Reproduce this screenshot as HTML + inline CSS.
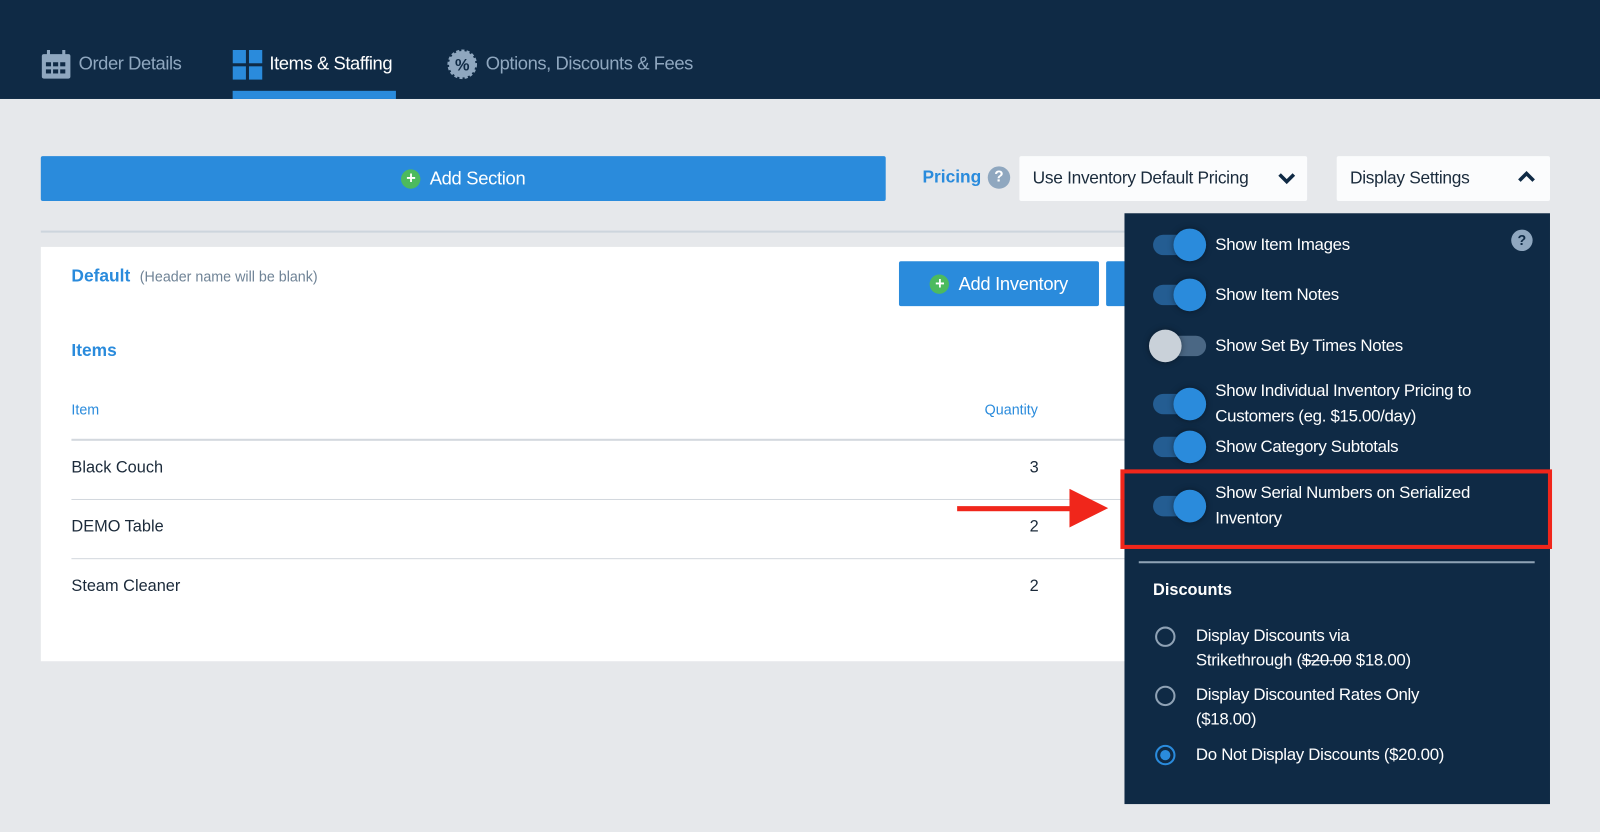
<!DOCTYPE html>
<html><head><style>
*{margin:0;padding:0;box-sizing:border-box}
body{width:1600px;height:815px;background:#e6e8eb;font-family:"Liberation Sans",sans-serif;position:relative;overflow:hidden}
#w{position:absolute;left:0;top:0;width:1600px;height:815px;transform:scale(1.0204);transform-origin:0 0}
.a{position:absolute}
.hdr{left:0;top:0;width:1600px;height:97px;background:#0f2a45}
.tab{top:52px;font-size:18px;color:#8fa7bf;white-space:nowrap;letter-spacing:-0.4px}
.btn{background:#2a8bdc;border-radius:2px;color:#fff;font-size:18px;display:flex;align-items:center;justify-content:center;letter-spacing:-0.3px}
.plus{width:19px;height:19px;border-radius:50%;background:#4cba5e;color:#fff;font-size:16px;font-weight:bold;line-height:19px;text-align:center;margin-right:9px}
.sel{background:#fbfcfd;border-radius:2px;font-size:17px;color:#1a2b3c;padding-left:13px;line-height:44px;letter-spacing:-0.3px}
.row{left:70px;width:1060px;height:1px;background:#d3d8de}
.cell{font-size:16px;color:#1b2a3a}
.tg{width:52px;height:24px}
.tg .tr{position:absolute;left:0;top:3px;width:52px;height:20px;border-radius:10px;background:#245d92}
.tg .kn{position:absolute;left:20px;top:-3px;width:32px;height:32px;border-radius:50%;background:#2a8bdc;box-shadow:0 0 6px rgba(0,0,0,.4)}
.tg.off .tr{background:#4a6784}
.tg.off .kn{left:-4px;background:#c9d1d9}
.lb{color:#fff;font-size:16.5px;line-height:25px;letter-spacing:-0.3px}
.rd{width:20px;height:20px;border-radius:50%;border:2px solid #8fa2b5}
</style></head><body><div id="w">
<div class="a hdr"></div>
<svg class="a" style="left:40px;top:48px" width="30" height="30" viewBox="0 0 30 30"><rect x="1" y="5" width="28" height="24" rx="2" fill="#8fa7bf"/><rect x="6" y="1" width="3" height="7" fill="#8fa7bf"/><rect x="21" y="1" width="3" height="7" fill="#8fa7bf"/><g fill="#0f2a45"><rect x="5" y="13" width="5" height="4"/><rect x="12" y="13" width="5" height="4"/><rect x="19" y="13" width="5" height="4"/><rect x="5" y="20" width="5" height="4"/><rect x="12" y="20" width="5" height="4"/><rect x="19" y="20" width="5" height="4"/></g></svg>
<div class="a tab" style="left:77px">Order Details</div>
<svg class="a" style="left:228px;top:49px" width="30" height="30"><g fill="#2a8bdc"><rect x="0" y="0" width="13" height="13"/><rect x="16" y="0" width="13" height="13"/><rect x="0" y="16" width="13" height="13"/><rect x="16" y="16" width="13" height="13"/></g></svg>
<div class="a tab" style="left:264px;color:#fff">Items &amp; Staffing</div>
<div class="a" style="left:228px;top:89px;width:160px;height:8px;background:#2a8bdc"></div>
<svg class="a" style="left:438px;top:48px" width="30" height="30" viewBox="0 0 30 30"><circle cx="15" cy="15" r="13" fill="#8fa7bf" stroke="#8fa7bf" stroke-width="3" stroke-dasharray="3 2"/><text x="15" y="21" font-size="16" font-weight="bold" text-anchor="middle" fill="#0f2a45" font-family="Liberation Sans">%</text></svg>
<div class="a tab" style="left:476px">Options, Discounts &amp; Fees</div>

<div class="a btn" style="left:40px;top:153px;width:828px;height:44px"><span class="plus">+</span>Add Section</div>
<div class="a" style="left:904px;top:164px;font-size:17px;font-weight:bold;color:#2a8bdc">Pricing</div>
<div class="a" style="left:968px;top:163px;width:22px;height:22px;border-radius:50%;background:#8fa7bf;color:#fff;font-weight:bold;font-size:15px;text-align:center;line-height:22px">?</div>
<div class="a sel" style="left:999px;top:153px;width:282px;height:44px">Use Inventory Default Pricing</div>
<svg class="a" style="left:1252px;top:168px" width="18" height="14"><path d="M2 3l7 7 7-7" stroke="#0f2a45" stroke-width="3.5" fill="none"/></svg>
<div class="a sel" style="left:1310px;top:153px;width:209px;height:44px">Display Settings</div>
<svg class="a" style="left:1487px;top:166px" width="18" height="14"><path d="M2 11l7-7 7 7" stroke="#0f2a45" stroke-width="3.5" fill="none"/></svg>

<div class="a" style="left:40px;top:226px;width:1100px;height:2px;background:#cdd5dd"></div>
<div class="a" style="left:40px;top:242px;width:1100px;height:406px;background:#fff"></div>
<div class="a" style="left:70px;top:261px;font-size:17px;font-weight:bold;color:#2a8bdc">Default</div>
<div class="a" style="left:137px;top:263px;font-size:14px;color:#6f8396">(Header name will be blank)</div>
<div class="a btn" style="left:881px;top:256px;width:196px;height:44px"><span class="plus">+</span>Add Inventory</div>
<div class="a btn" style="left:1084px;top:256px;width:40px;height:44px"></div>
<div class="a" style="left:70px;top:334px;font-size:17px;font-weight:bold;color:#2a8bdc">Items</div>
<div class="a" style="left:70px;top:393px;font-size:14px;color:#2a8bdc">Item</div>
<div class="a" style="left:965px;top:393px;font-size:14px;color:#2a8bdc">Quantity</div>
<div class="a row" style="top:430px;height:2px"></div>
<div class="a cell" style="left:70px;top:450px">Black Couch</div><div class="a cell" style="left:1009px;top:450px">3</div>
<div class="a row" style="top:489px"></div>
<div class="a cell" style="left:70px;top:508px">DEMO Table</div><div class="a cell" style="left:1009px;top:508px">2</div>
<div class="a row" style="top:547px"></div>
<div class="a cell" style="left:70px;top:566px">Steam Cleaner</div><div class="a cell" style="left:1009px;top:566px">2</div>

<div class="a" style="left:938px;top:496px;width:120px;height:5px;background:#f0261b"></div>
<svg class="a" style="left:1048px;top:479px" width="40" height="40"><path d="M0 0L38 19L0 38Z" fill="#f0261b"/></svg>

<div class="a" style="left:1102px;top:209px;width:417px;height:579px;background:#0f2a45"></div>
<div class="a" style="left:1481px;top:225px;width:21px;height:21px;border-radius:50%;background:#8fa7bf;color:#0f2a45;font-weight:bold;font-size:14px;text-align:center;line-height:21px">?</div>
<div class="a tg" style="left:1130px;top:227px"><div class="tr"></div><div class="kn"></div></div>
<div class="a lb" style="left:1191px;top:228px">Show Item Images</div>
<div class="a tg" style="left:1130px;top:276px"><div class="tr"></div><div class="kn"></div></div>
<div class="a lb" style="left:1191px;top:277px">Show Item Notes</div>
<div class="a tg off" style="left:1130px;top:326px"><div class="tr"></div><div class="kn"></div></div>
<div class="a lb" style="left:1191px;top:327px">Show Set By Times Notes</div>
<div class="a tg" style="left:1130px;top:383px"><div class="tr"></div><div class="kn"></div></div>
<div class="a lb" style="left:1191px;top:371px">Show Individual Inventory Pricing to<br>Customers (eg. $15.00/day)</div>
<div class="a tg" style="left:1130px;top:425px"><div class="tr"></div><div class="kn"></div></div>
<div class="a lb" style="left:1191px;top:426px">Show Category Subtotals</div>
<div class="a" style="left:1098px;top:460px;width:423px;height:78px;border:4px solid #f0261b"></div>
<div class="a tg" style="left:1130px;top:483px"><div class="tr"></div><div class="kn"></div></div>
<div class="a lb" style="left:1191px;top:471px">Show Serial Numbers on Serialized<br>Inventory</div>
<div class="a" style="left:1116px;top:550px;width:388px;height:2px;background:#8fa2b5"></div>
<div class="a" style="left:1130px;top:570px;color:#fff;font-size:16px;font-weight:bold">Discounts</div>
<div class="a rd" style="left:1132px;top:614px"></div>
<div class="a lb" style="left:1172px;top:611px;line-height:24px">Display Discounts via<br>Strikethrough (<s>$20.00</s> $18.00)</div>
<div class="a rd" style="left:1132px;top:672px"></div>
<div class="a lb" style="left:1172px;top:669px;line-height:24px">Display Discounted Rates Only<br>($18.00)</div>
<div class="a rd" style="left:1132px;top:730px;border-color:#2a8bdc;display:flex;align-items:center;justify-content:center"><div style="width:10px;height:10px;border-radius:50%;background:#2a8bdc"></div></div>
<div class="a lb" style="left:1172px;top:728px;line-height:24px">Do Not Display Discounts ($20.00)</div>
</div></body></html>
